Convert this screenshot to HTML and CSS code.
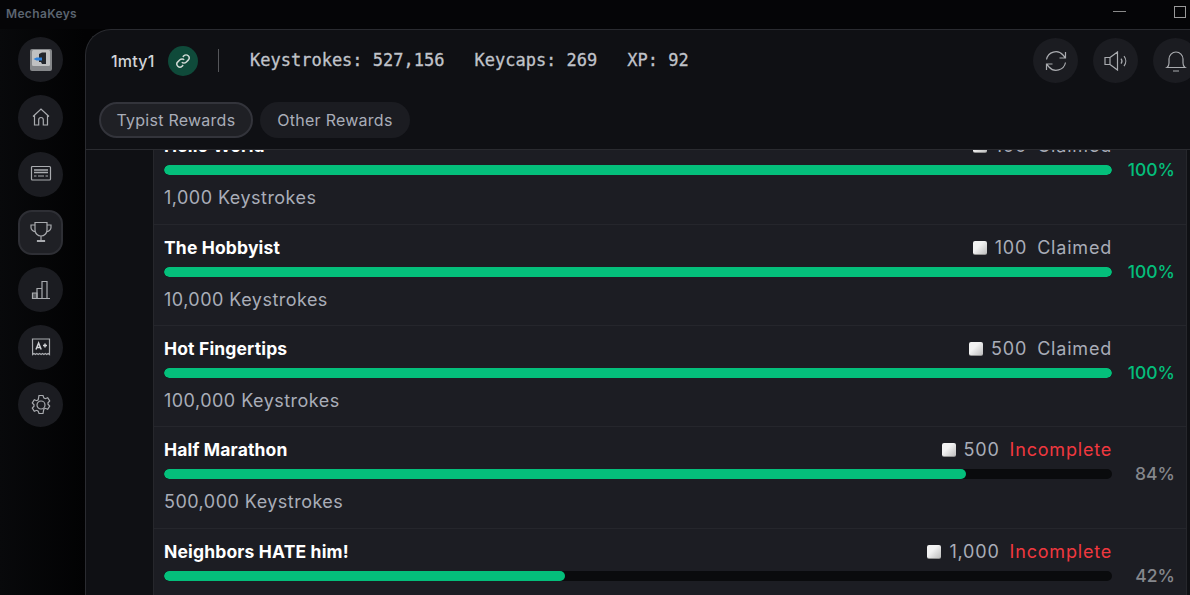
FILE: index.html
```html
<!DOCTYPE html>
<html lang="en">
<head>
    <meta charset="UTF-8">
    <title>MechaKeys</title>
    <link rel="stylesheet" href="styles.css">
</head>
<body>
    <div class="titlebar">
        <span class="app-name">MechaKeys</span>
        <div class="win-controls">
            <span class="win-min"></span>
            <span class="win-max"></span>
        </div>
    </div>
    <div class="app">
        <nav class="sidebar">
            <div class="side-btn">
                <svg width="22" height="22" viewBox="0 0 22 22">
                    <rect x="0" y="0" width="22" height="22" rx="2" fill="#85878a"/>
                    <rect x="2" y="1" width="18" height="16" rx="1.500" fill="#c0c1c2"/>
                    <path d="M9 5l3-1.500h4V15h-4l-1-2H9z" fill="#24272d"/>
                    <path d="M3.500 10l3-1.500H12v3H6.500z" fill="#2f80d8"/>
                </svg>
            </div>
            <div class="side-btn">
                <svg width="20" height="20" viewBox="0 0 20 20" class="ico">
                    <path d="M2 9.500L10 2l8 7.500M3.500 8.500V18h4.200v-5.200a2.300 2.300 0 0 1 4.600 0V18h4.200V8.500"/>
                </svg>
            </div>
            <div class="side-btn">
                <svg width="22" height="22" viewBox="0 0 22 22" class="ico">
                    <rect x="1.500" y="2.500" width="19" height="13.500" rx="1"/>
                    <path d="M4 6h14M4 8.500h14" stroke-width="1.400"/>
                    <path d="M4 12h2.500M8 12h6M15.500 12H18"/>
                </svg>
            </div>
            <div class="side-btn active">
                <svg width="22" height="22" viewBox="0 0 22 22" class="ico">
                    <path d="M5 1.500h12v7.500a6 6 0 0 1-12 0zM5 4H1v2.500c0 2 1.500 3.500 4.700 4.500M17 4h4v2.500c0 2-1.500 3.500-4.700 4.500M11 15v4.500M7.500 20.500h7v-1h-7z"/>
                </svg>
            </div>
            <div class="side-btn">
                <svg width="20" height="20" viewBox="0 0 20 20" class="ico">
                    <path d="M1.500 13h4.500v5.500H1.500z" fill="#55575b"/>
                    <path d="M1 18.500h18M6 18.500V8.500h5v10M11 18.500V1.500h5v17"/>
                </svg>
            </div>
            <div class="side-btn">
                <svg width="20" height="20" viewBox="0 0 20 20" class="ico">
                    <path d="M1.500 2h17v15.500l-1.400-1-1.400 1-1.400-1-1.400 1-1.400-1-1.400 1-1.500-1-1.400 1-1.400-1-1.400 1-1.400-1-1.400 1z"/>
                    <path d="M5 12.500l2.600-6.500 2.600 6.500M6 10.500h3.200M12 8.500h4M14 6.500v4" stroke="#d0d2d5" stroke-width="1.500"/>
                </svg>
            </div>
            <div class="side-btn">
                <svg width="20" height="20" viewBox="0 0 20 20" class="ico">
                    <circle cx="10" cy="10" r="4"/>
                    <path d="M8 1h4l.8 2.400 1.500.8 2.400-1 2 3.300-1.700 1.800v1.400l1.700 1.800-2 3.300-2.400-1-1.500.8L12 19H8l-.8-2.400-1.500-.8-2.400 1-2-3.300L3 11.700v-1.400L1.300 8.500l2-3.300 2.400 1 1.500-.8z" transform="translate(0 -.500)"/>
                </svg>
            </div>
        </nav>
        <main class="panel">
            <header class="panel-head">
                <div class="top-row">
                    <span class="username">1mty1</span>
                    <span class="link-btn">
                        <svg width="16" height="16" viewBox="0 0 16 16" class="ico">
                            <path d="M6.800 9.200a3 3 0 0 0 4.300 0l2.100-2.100a3 3 0 0 0-4.300-4.300L7.800 3.900M9.200 6.800a3 3 0 0 0-4.300 0L2.800 8.900a3 3 0 0 0 4.300 4.300l1.100-1.100"/>
                        </svg>
                    </span>
                    <span class="divider"></span>
                    <div class="stats">
                        <span>Keystrokes: 527,156</span>
                        <span>Keycaps: 269</span>
                        <span>XP: 92</span>
                    </div>
                    <div class="actions">
                        <div class="side-btn">
                            <svg width="22" height="22" viewBox="0 0 22 22" class="ico">
                                <path d="M1.500 9.500A9.500 9.500 0 0 1 18 5L20.500 8M20.500 2V8H14.500M20.500 12.500A9.500 9.500 0 0 1 4 17L1.500 14M1.500 20V14H7.500"/>
                            </svg>
                        </div>
                        <div class="side-btn">
                            <svg width="24" height="24" viewBox="0 0 24 24" class="ico">
                                <path d="M1 8.500h5v7H1zM6 8.500L13.500 3v18L6 15.500M17 9.500a4 4 0 0 1 0 5M20 7a8 8 0 0 1 0 10"/>
                            </svg>
                        </div>
                        <div class="side-btn">
                            <svg width="24" height="24" viewBox="0 0 24 24" class="ico">
                                <path d="M3 18.500h18c-1.500-1-2-2.500-2-4.500V10a7 7 0 0 0-14 0v4c0 2-.5 3.500-2 4.500zM9 22h6"/>
                            </svg>
                        </div>
                    </div>
                </div>
                <div class="tabs">
                    <span class="tab selected">Typist Rewards</span>
                    <span class="tab">Other Rewards</span>
                </div>
            </header>
            <div class="list-wrap">
                <div class="list">
                    <div class="row">
                        <div class="row-top">
                            <span class="row-title">Hello World</span>
                            <span class="reward"><i class="keycap"></i><span class="amount">100</span><span class="status">Claimed</span></span>
                        </div>
                        <div class="pct done">100%</div>
                        <div class="bar"><div class="fill" style="width: 100%"></div></div>
                        <div class="row-desc">1,000 Keystrokes</div>
                    </div>
                    <div class="row">
                        <div class="row-top">
                            <span class="row-title">The Hobbyist</span>
                            <span class="reward"><i class="keycap"></i><span class="amount">100</span><span class="status">Claimed</span></span>
                        </div>
                        <div class="pct done">100%</div>
                        <div class="bar"><div class="fill" style="width: 100%"></div></div>
                        <div class="row-desc">10,000 Keystrokes</div>
                    </div>
                    <div class="row">
                        <div class="row-top">
                            <span class="row-title">Hot Fingertips</span>
                            <span class="reward"><i class="keycap"></i><span class="amount">500</span><span class="status">Claimed</span></span>
                        </div>
                        <div class="pct done">100%</div>
                        <div class="bar"><div class="fill" style="width: 100%"></div></div>
                        <div class="row-desc">100,000 Keystrokes</div>
                    </div>
                    <div class="row">
                        <div class="row-top">
                            <span class="row-title">Half Marathon</span>
                            <span class="reward"><i class="keycap"></i><span class="amount">500</span><span class="status missing">Incomplete</span></span>
                        </div>
                        <div class="pct">84%</div>
                        <div class="bar"><div class="fill" style="width: 84.6%"></div></div>
                        <div class="row-desc">500,000 Keystrokes</div>
                    </div>
                    <div class="row">
                        <div class="row-top">
                            <span class="row-title">Neighbors HATE him!</span>
                            <span class="reward"><i class="keycap"></i><span class="amount">1,000</span><span class="status missing">Incomplete</span></span>
                        </div>
                        <div class="pct">42%</div>
                        <div class="bar"><div class="fill" style="width: 42.3%"></div></div>
                        <div class="row-desc">1,000,000 Keystrokes</div>
                    </div>
                </div>
            </div>
        </main>
    </div>
</body>
</html>
```
FILE: styles.css
```css
body {
    margin: 0;
    height: 595px;
    overflow: hidden;
    display: flex;
    flex-direction: column;
    background: linear-gradient(90deg, #08090b, #020203 85px);
    font-family: Inter, sans-serif;
    color: #a9adb8;
}
.titlebar {
    height: 29px;
    flex-shrink: 0;
    display: flex;
    align-items: center;
    justify-content: space-between;
    background: #050507;
}
.app-name {
    margin-left: 6px;
    margin-top: -2px;
    font-size: 12px;
    font-weight: 600;
    letter-spacing: 0.35px;
    color: #5b6470;
}
.win-controls {
    display: flex;
    align-items: center;
    gap: 48px;
    margin-right: 4px;
    margin-top: -6px;
}
.win-min {
    width: 13px;
    height: 1px;
    background: #8a8a8a;
}
.win-max {
    width: 10px;
    height: 10px;
    border: 1px solid #9a9a9a;
}
.app {
    flex: 1;
    display: flex;
    min-height: 0;
}
.sidebar {
    width: 85px;
    flex-shrink: 0;
    padding-top: 8px;
    padding-left: 18px;
    box-sizing: border-box;
    display: flex;
    flex-direction: column;
    gap: 12.5px;
}
.side-btn {
    width: 45px;
    height: 45px;
    flex-shrink: 0;
    border-radius: 50%;
    background: #1b1c21;
    display: flex;
    align-items: center;
    justify-content: center;
}
.side-btn.active {
    border-radius: 14px;
    box-sizing: border-box;
    border: 2px solid #2e2f35;
    background: #1f2025;
}
.ico {
    fill: none;
    stroke: #a9abaf;
    stroke-width: 1.2;
}
.panel {
    flex: 1;
    min-width: 0;
    display: flex;
    flex-direction: column;
    background: #0f1014;
    border-left: 1px solid #2a2b30;
    border-top: 1px solid #2a2b30;
    border-top-left-radius: 26px;
    overflow: hidden;
}
.panel-head {
    height: 120px;
    flex-shrink: 0;
    box-sizing: border-box;
    border-bottom: 1px solid #2a2b30;
}
.top-row {
    display: flex;
    align-items: center;
    height: 45px;
    margin-top: 8px;
    padding-left: 25px;
}
.username {
    font-size: 16px;
    font-weight: 500;
    letter-spacing: 0.2px;
    color: #d2d4d8;
    width: 57px;
}
.link-btn {
    width: 30px;
    height: 30px;
    border-radius: 50%;
    background: #0f4a3a;
    display: flex;
    align-items: center;
    justify-content: center;
}
.link-btn .ico {
    stroke: #cfd8d4;
    stroke-width: 1.5;
}
.divider {
    width: 1px;
    height: 23px;
    background: #55565a;
    margin-left: 20px;
    margin-right: 31px;
}
.stats {
    display: flex;
    gap: 30px;
    margin-top: -2px;
    font-family: "DejaVu Sans Mono", monospace;
    font-size: 17px;
    color: #c0c3ca;
    -webkit-text-stroke: 0.3px #c0c3ca;
}
.actions {
    margin-left: auto;
    margin-right: -8px;
    display: flex;
    gap: 15px;
}
.tabs {
    display: flex;
    gap: 7px;
    margin-top: 19px;
    padding-left: 13px;
}
.tab {
    height: 36px;
    box-sizing: border-box;
    padding: 0 17.5px;
    border-radius: 18px;
    background: #1b1c21;
    font-size: 16px;
    letter-spacing: 0.25px;
    line-height: 36px;
    color: #a9adb8;
}
.tab.selected {
    background: #1f2025;
    border: 2px solid #33343b;
    padding: 0 15.5px;
    line-height: 32px;
}
.list-wrap {
    flex: 1;
    min-height: 0;
    overflow: hidden;
    margin-left: 67px;
    margin-right: 3px;
    background: #1c1d23;
    border-left: 1px solid #26272c;
    border-right: 1px solid #26272c;
}
.list {
    margin-top: -26.7px;
}
.row {
    height: 101.33px;
    box-sizing: border-box;
    padding: 12px 11px 0 10px;
    display: grid;
    grid-template-columns: 948px 1fr;
    align-content: start;
    border-bottom: 1px solid #25262c;
}
.row-top {
    height: 22px;
    grid-column: 1;
    display: flex;
    align-items: center;
    justify-content: space-between;
    margin-bottom: 8px;
    line-height: 22px;
}
.row-title {
    font-size: 17.5px;
    font-weight: 700;
    letter-spacing: 0.15px;
    color: #fff;
}
.reward {
    display: flex;
    align-items: center;
    font-size: 18px;
    letter-spacing: 0.8px;
}
.keycap {
    width: 14px;
    height: 13px;
    margin-right: 8px;
    border-radius: 2px;
    background: linear-gradient(135deg, #f2f2f2 40%, #bdbdbd);
    border-bottom: 1px solid #8f8f8f;
}
.amount {
    margin-right: 10px;
}
.status.missing {
    color: #f0383f;
}
.bar {
    grid-row: 2;
    grid-column: 1;
    height: 10px;
    border-radius: 5px;
    background: #0a0b0d;
    overflow: hidden;
}
.fill {
    height: 100%;
    border-radius: 5px;
    background: #04bf7b;
}
.pct {
    grid-row: 2;
    grid-column: 2;
    height: 10px;
    line-height: 10px;
    text-align: right;
    font-size: 17.5px;
    font-weight: 500;
    color: #85878c;
}
.pct.done {
    color: #04bf7b;
}
.row-desc {
    grid-column: 1;
    margin-top: 12px;
    font-size: 18px;
    letter-spacing: 0.47px;
    line-height: 22px;
}
```
